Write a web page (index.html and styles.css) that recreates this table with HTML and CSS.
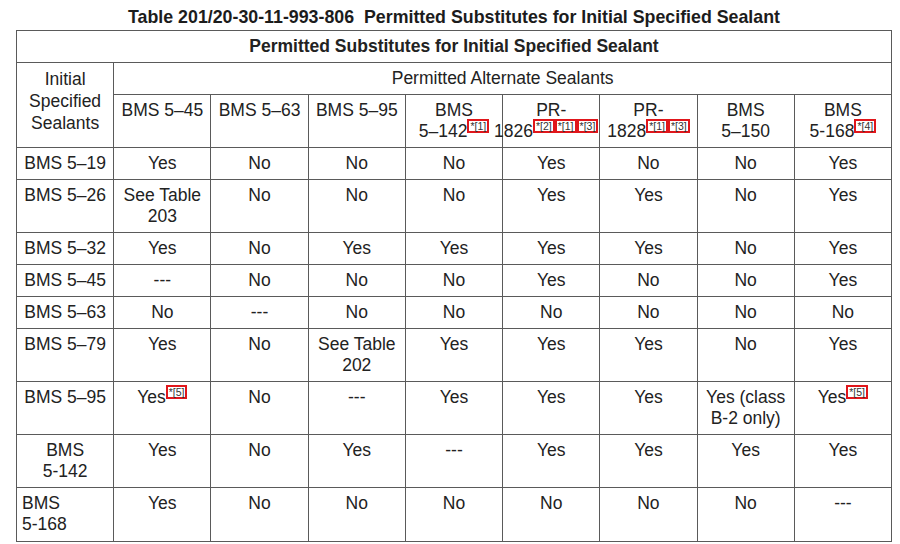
FILE: index.html
```html
<!DOCTYPE html>
<html lang="en">
<head>
<meta charset="utf-8">
<title>Table 201/20-30-11-993-806</title>
<link rel="stylesheet" href="styles.css">
</head>
<body>
<div class="title">Table 201/20-30-11-993-806&nbsp; Permitted Substitutes for Initial Specified Sealant</div>
<table class="subst">
  <colgroup>
    <col><col><col><col><col><col><col><col><col>
  </colgroup>
  <thead>
    <tr><th colspan="9" class="head-main">Permitted Substitutes for Initial Specified Sealant</th></tr>
    <tr><th rowspan="2" class="init">Initial<br>Specified<br>Sealants</th><th colspan="8">Permitted Alternate Sealants</th></tr>
    <tr>
      <th>BMS 5–45</th>
      <th>BMS 5–63</th>
      <th>BMS 5–95</th>
      <th>BMS<br>5–142<a class="ref">*[1]</a></th>
      <th>PR-<span class="wide">1826<a class="ref">*[2]</a><a class="ref">*[1]</a><a class="ref">*[3]</a></span></th>
      <th>PR-<br>1828<a class="ref">*[1]</a><a class="ref">*[3]</a></th>
      <th>BMS<br>5–150</th>
      <th>BMS<br>5-168<a class="ref">*[4]</a></th>
    </tr>
  </thead>
  <tbody>
    <tr><td>BMS 5–19</td><td>Yes</td><td>No</td><td>No</td><td>No</td><td>Yes</td><td>No</td><td>No</td><td>Yes</td></tr>
    <tr><td>BMS 5–26</td><td>See Table 203</td><td>No</td><td>No</td><td>No</td><td>Yes</td><td>Yes</td><td>No</td><td>Yes</td></tr>
    <tr><td>BMS 5–32</td><td>Yes</td><td>No</td><td>Yes</td><td>Yes</td><td>Yes</td><td>Yes</td><td>No</td><td>Yes</td></tr>
    <tr><td>BMS 5–45</td><td>---</td><td>No</td><td>No</td><td>No</td><td>Yes</td><td>No</td><td>No</td><td>Yes</td></tr>
    <tr><td>BMS 5–63</td><td>No</td><td>---</td><td>No</td><td>No</td><td>No</td><td>No</td><td>No</td><td>No</td></tr>
    <tr><td>BMS 5–79</td><td>Yes</td><td>No</td><td>See Table 202</td><td>Yes</td><td>Yes</td><td>Yes</td><td>No</td><td>Yes</td></tr>
    <tr><td>BMS 5–95</td><td>Yes<a class="ref">*[5]</a></td><td>No</td><td>---</td><td>Yes</td><td>Yes</td><td>Yes</td><td>Yes (class B-2 only)</td><td>Yes<a class="ref">*[5]</a></td></tr>
    <tr><td>BMS<br>5-142</td><td>Yes</td><td>No</td><td>Yes</td><td>---</td><td>Yes</td><td>Yes</td><td>Yes</td><td>Yes</td></tr>
    <tr class="last"><td class="left">BMS<br>5-168</td><td>Yes</td><td>No</td><td>No</td><td>No</td><td>No</td><td>No</td><td>No</td><td>---</td></tr>
  </tbody>
</table>
<p class="note">NOTE: This table shows the sealants that are permitted as substitutes for the initial specified sealant.</p>
</body>
</html>
```
FILE: styles.css
```css
html, body {
  margin: 0;
  background: #ffffff;
}

body {
  padding: 7px 8px 0 16px;
  font-family: "Liberation Sans", Arial, sans-serif;
  color: #222222;
}

.title {
  width: 876px;
  text-align: center;
  font-weight: bold;
  font-size: 17.8px;
  line-height: 21px;
  margin-bottom: 2px;
  color: #1c1c1c;
  white-space: nowrap;
}

.subst {
  border-collapse: collapse;
  table-layout: fixed;
  width: 876px;
  font-size: 17.5px;
  line-height: 21px;
}

.subst th,
.subst td {
  border: 1px solid #5a5a5a;
  padding: 5px;
  vertical-align: top;
  text-align: center;
  font-weight: normal;
}

.subst .head-main {
  font-weight: bold;
}

.subst .init {
  line-height: 22px;
}

.subst .left {
  text-align: left;
}

.subst .last td {
  padding-bottom: 6px;
}

.wide {
  display: block;
  margin: 0 -10px 0 -20px;
  text-align: center;
  white-space: nowrap;
}

.ref {
  display: inline-block;
  font-size: 10.5px;
  line-height: 10px;
  color: #333333;
  border: 2px solid #e0161b;
  padding: 0 1px;
  margin-top: -4px;
  vertical-align: 7px;
}

.note {
  margin: 3px 0 0 2px;
  font-size: 17px;
  color: #9a9a9a;
}
```
